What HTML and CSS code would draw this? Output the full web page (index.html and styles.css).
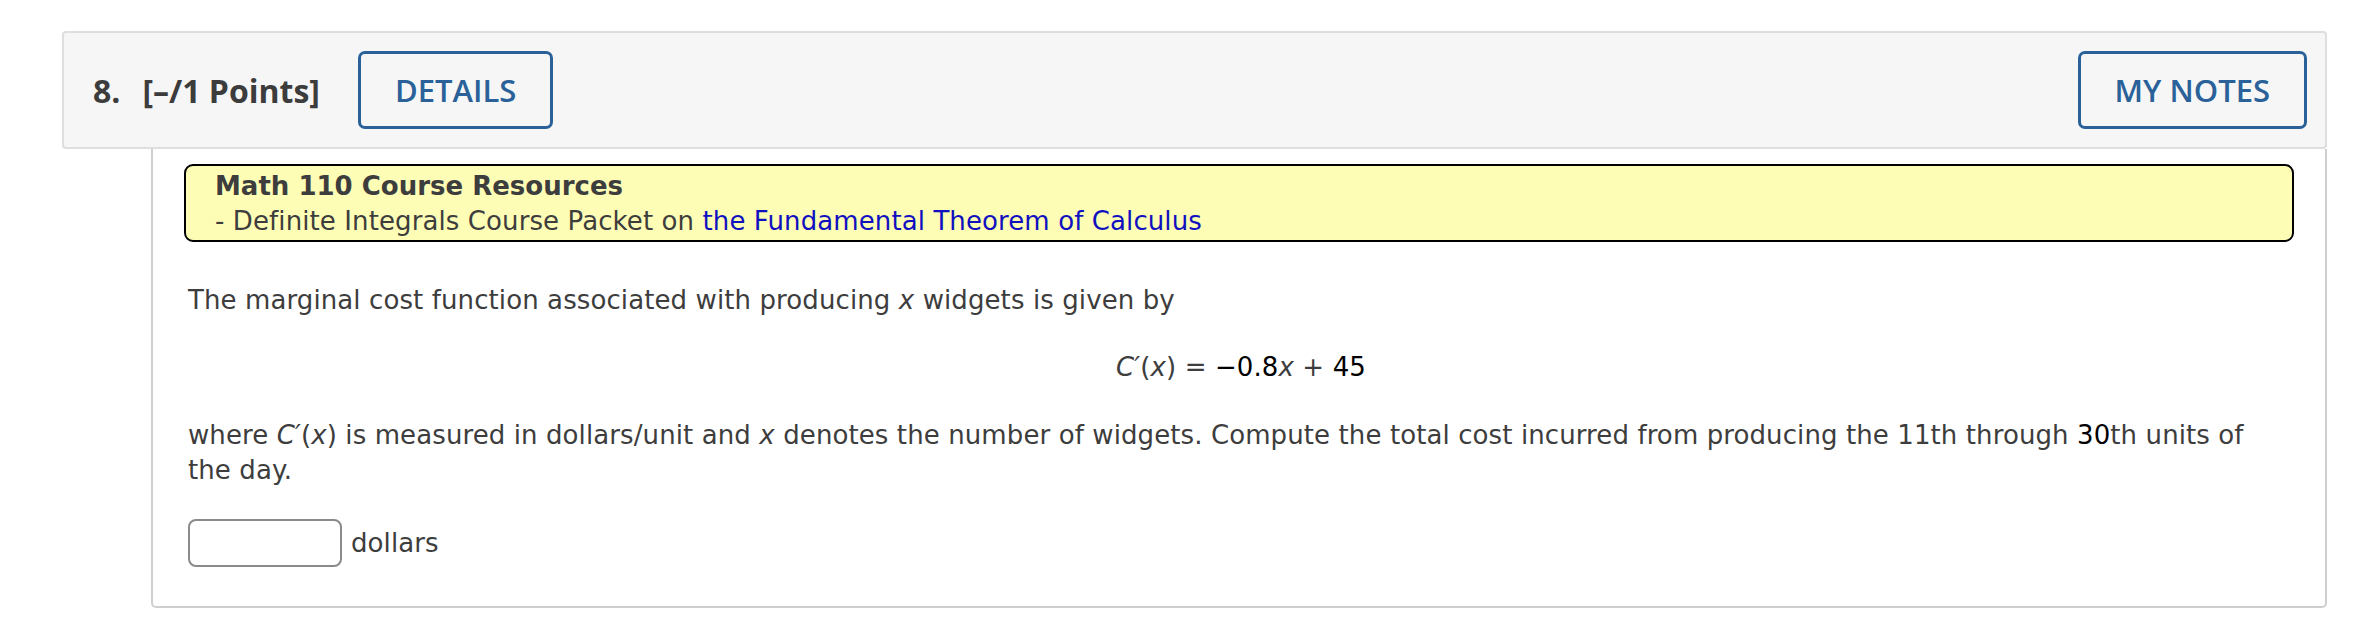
FILE: index.html
```html
<!DOCTYPE html>
<html lang="en">
<head>
<meta charset="utf-8">
<title>Question 8</title>
<link rel="stylesheet" href="styles.css">
</head>
<body>
<div class="page">
  <div class="q-header">
    <div class="q-title"><span class="q-num">8.</span><span class="q-points">[–/1 Points]</span></div>
    <button class="q-btn details">DETAILS</button>
    <div class="spacer"></div>
    <button class="q-btn">MY NOTES</button>
  </div>
  <div class="q-body">
    <div class="resources">
      <div class="res-title">Math 110 Course Resources</div>
      <div class="res-line">- Definite Integrals Course Packet on <a class="res-link" href="#">the Fundamental Theorem of Calculus</a></div>
    </div>
    <div class="content">
      <p class="txt intro">The marginal cost function associated with producing <i>x</i> widgets is given by</p>
      <div class="formula"><i>C′</i>(<i>x</i>) = <span class="val">−0.8</span><i>x</i> + <span class="val">45</span></div>
      <p class="txt where">where <i>C′</i>(<i>x</i>) is measured in dollars/unit and <i>x</i> denotes the number of widgets. Compute the total cost incurred from producing the 11th through <span class="val">30</span>th units of the day.</p>
      <div class="answer"><input class="ans-input" type="text"><span class="unit">dollars</span></div>
    </div>
  </div>
</div>
</body>
</html>
```

FILE: styles.css
```css
html, body {
  margin: 0;
  padding: 0;
  background: #ffffff;
}
.page {
  padding: 31px 33px 0 62px;
}
.q-header {
  display: flex;
  align-items: center;
  background: #f6f6f6;
  border: 2px solid #dedede;
  border-radius: 4px;
  padding: 18px 18px 18px 29px;
}
.q-title {
  font-family: "Open Sans", sans-serif;
  font-weight: 700;
  font-size: 32px;
  color: #3c3c3c;
  display: flex;
  align-items: center;
  margin-right: 38px;
}
.q-num {
  margin-right: 22px;
}
.spacer {
  flex: 1;
}
.q-btn {
  font-family: "Open Sans", sans-serif;
  font-weight: 600;
  font-size: 31px;
  color: #2a6199;
  background: transparent;
  border: 3px solid #2a6199;
  border-radius: 7px;
  height: 78px;
  padding: 0 34px;
  margin: 0;
  cursor: pointer;
}
.q-body {
  margin-left: 89px;
  border: 2px solid #cfcfcf;
  border-top: none;
  border-radius: 0 0 5px 5px;
  padding: 15px 31px 39px 31px;
  font-family: "DejaVu Sans", Verdana, sans-serif;
  font-size: 26px;
  letter-spacing: 0.1px;
  line-height: 35px;
  color: #3d3d3d;
}
.resources {
  background: #fdfdb6;
  border: 2px solid #000;
  border-radius: 9px;
  padding: 3px 29px 1px;
  margin-bottom: 41px;
}
.res-title {
  font-weight: 700;
  letter-spacing: 0;
}
.res-link {
  color: #1010c0;
  text-decoration: none;
}
.content {
  padding-left: 4px;
}
.txt {
  margin: 0;
}
.formula {
  text-align: center;
  margin: 32px 0 33px;
}
.val {
  color: #000;
}
.answer {
  display: flex;
  align-items: center;
  margin-top: 31px;
}
.ans-input {
  width: 154px;
  height: 48px;
  box-sizing: border-box;
  border: 2px solid #8a8a8a;
  border-radius: 8px;
  margin: 0 9px 0 0;
  padding: 0;
  background: #fff;
}
.unit {
  color: #3d3d3d;
}
```
